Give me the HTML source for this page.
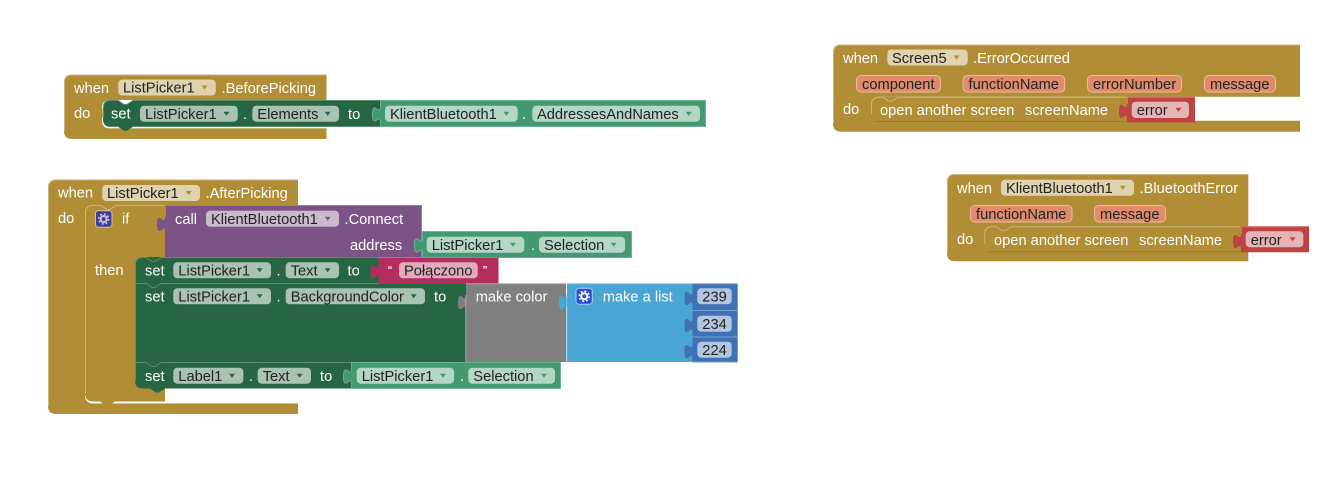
<!DOCTYPE html>
<html><head><meta charset="utf-8">
<style>
html,body{margin:0;padding:0;background:#fff;width:1335px;height:481px;overflow:hidden}
svg{display:block}
text{font-family:"Liberation Sans",Arial,sans-serif;font-size:14.67px;fill:#fff}
text.d{fill:#222}
.gold{fill:#b18e35}.gs{fill:#b18e35;stroke:#c9b071;stroke-width:1}
.dg{fill:#266643}.lg{fill:#439970;stroke:#6cb093;stroke-width:1}
.f1{fill:#dfd2ae}.f2{fill:#a8c2b4}.f3{fill:#b4d6c6}.f4{fill:#cbbace}.f5{fill:#e1abbe}.f6{fill:#b2c6e1}.f7{fill:#e5b4b4}
.arg{fill:#e08c6c;stroke:#efb9a3;stroke-width:1}
.ln{fill:none;stroke:#5d8c73;stroke-width:1}
.dk{fill:none;stroke:#9a7c2e;stroke-width:1}
.lt{fill:none;stroke:#cdb67c;stroke-width:1}
</style></head>
<body>
<svg width="1335" height="481" viewBox="0 0 1335 481" xmlns="http://www.w3.org/2000/svg">

<!-- BLOCK 1: BeforePicking -->
<path class="gold" d="M72 74.5H326.500V100H110Q102 100 102 108V120Q102 128 110 128H326.500V139H72Q64 139 64 131V82.500Q64 74.500 72 74.500Z"/>
<path class="lt" d="M64.500 131V82.500Q64.500 75 72 75H326"/>
<path class="lt" d="M102.500 108V118"/>
<path fill="#fff" opacity=".75" d="M102 118V120Q102 128.500 110 128.500H327V127.600H110Q103 127.600 103 120V118Z"/>
<path class="dg" d="M110 100H118l6 4 3 0 6-4H380V126.700H133l-6 4h-3l-6-4H110Q103 126.700 103 119V108Q103 100 110 100Z"/>
<path class="ln" d="M103.500 118V108Q103.500 100.500 110 100.500H118l6 4 3 0 6-4H380"/>
<path class="lg" d="M380.500 100.500H705.500V126.500H380.500V122c0-10-8 8-8-7.500s8 2.500 8-7.500Z"/>
<text x="74" y="93">when</text>
<rect class="f1" x="118.300" y="79.500" width="97.400" height="16" rx="4"/>
<text class="d" x="123" y="92.700">ListPicker1</text>
<path fill="#b18e35" d="M201.400 85.500h6l-3 4z"/>
<text x="221.500" y="93">.BeforePicking</text>
<text x="74" y="118">do</text>
<text x="111" y="118.500">set</text>
<rect class="f2" x="140" y="105.700" width="97.700" height="16" rx="4"/>
<text class="d" x="145" y="119">ListPicker1</text>
<path fill="#266643" d="M223.400 111.700h6l-3 4z"/>
<text x="243" y="119">.</text>
<rect class="f2" x="252.300" y="105.700" width="86.700" height="16" rx="4"/>
<text class="d" x="257.300" y="119">Elements</text>
<path fill="#266643" d="M324.700 111.700h6l-3 4z"/>
<text x="348" y="119">to</text>
<rect class="f3" x="385" y="105.700" width="132.700" height="16" rx="4"/>
<text class="d" x="390" y="119">KlientBluetooth1</text>
<path fill="#439970" d="M503.400 111.700h6l-3 4z"/>
<text x="522" y="119">.</text>
<rect class="f3" x="532.300" y="105.700" width="167.700" height="16" rx="4"/>
<text class="d" x="537" y="119">AddressesAndNames</text>
<path fill="#439970" d="M685.700 111.700h6l-3 4z"/>

<!-- BLOCK 2: AfterPicking -->
<path class="gold" d="M56 179.500H298V205H93Q85 205 85 213V395Q85 403 93 403H298V414H56Q48 414 48 406V187.500Q48 179.500 56 179.500Z"/>
<path class="lt" d="M48.500 406V187.500Q48.500 180 56 180H298"/>
<path fill="#fff" opacity=".85" d="M85 392V395Q85 403.500 93 403.500H298V402.600H93Q86 402.600 86 395V392Z"/>
<path class="gold" d="M93 205H165V257H143Q135 257 135 265V380Q135 388 143 388H165V401.500H115l-6 4h-3l-6-4H93Q85 401.500 85 393V213Q85 205 93 205Z"/>
<path class="lt" d="M85.500 393V213Q85.500 205.500 93 205.500H101l6 4 3 0 6-4H165"/>
<path class="lt" d="M135.500 265V380"/>
<path fill="#fff" d="M135 380Q135 388.500 143 388.500H165V387.600H143Q136 387.600 136 380Z" opacity=".8"/>

<!-- purple call -->
<path fill="#7c5385" d="M165 205H422V257H165V232c0-10-8 8-8-7.500s8 2.500 8-7.500Z"/>
<path fill="none" stroke="#9b7ba3" d="M165.500 216.500V205.500H421.500V257"/>

<!-- set row green -->
<path class="dg" d="M143 257H380V284H135V265Q135 257 143 257Z"/>
<path class="dg" d="M135 284H466V362H135Z"/>
<path class="dg" d="M135 362H352V388.500H165l-6 4h-3l-6-4H143Q135 388.500 135 381Z"/>
<path class="ln" d="M135.500 265Q135.500 257.500 143 257.500H146l6 4 3 0 6-4H380"/>
<path class="ln" d="M135.500 265V381"/>
<path class="ln" d="M135 283.500H146l6 4 3 0 6-4H380"/>
<path class="ln" d="M135 362.500H146l6 4 3 0 6-4H351"/>

<text x="58" y="197.700">when</text>
<rect class="f1" x="102.300" y="185" width="97.700" height="16" rx="4"/>
<text class="d" x="107" y="198">ListPicker1</text>
<path fill="#b18e35" d="M185.700 191h6l-3 4z"/>
<text x="205.500" y="198">.AfterPicking</text>
<text x="58" y="223">do</text>
<rect x="95.500" y="210.700" width="16.500" height="16.500" rx="3" fill="#443a9c" stroke="#cfc4a0" stroke-width="1"/>
<circle cx="103.700" cy="219" r="3" fill="none" stroke="#c9c6dc" stroke-width="2"/>
<circle cx="103.700" cy="219" r="5" fill="none" stroke="#c9c6dc" stroke-width="1.500" stroke-dasharray="2 1.930"/>
<text x="122" y="223.500">if</text>
<text x="95" y="275">then</text>

<text x="175" y="224">call</text>
<rect class="f4" x="206" y="210.700" width="133" height="16" rx="4"/>
<text class="d" x="211" y="224">KlientBluetooth1</text>
<path fill="#7c5385" d="M324.700 216.700h6l-3 4z"/>
<text x="344.500" y="224">.Connect</text>
<text x="350" y="250">address</text>

<path class="lg" d="M422.500 231.500H631.500V257.500H422.500V253c0-10-8 8-8-7.500s8 2.500 8-7.500Z"/>
<rect class="f3" x="426.700" y="236.700" width="97.600" height="16" rx="4"/>
<text class="d" x="431.700" y="250">ListPicker1</text>
<path fill="#439970" d="M510 242.700h6l-3 4z"/>
<text x="531" y="250">.</text>
<rect class="f3" x="539" y="236.700" width="86" height="16" rx="4"/>
<text class="d" x="544" y="250">Selection</text>
<path fill="#439970" d="M610.700 242.700h6l-3 4z"/>

<!-- string -->
<path fill="#b32d5e" d="M378.500 257H498.500V284H378.500V279c0-10-8 8-8-7.500s8 2.500 8-7.500Z"/>
<path fill="none" stroke="#c96a8d" d="M378.500 257.500H498"/>
<text x="145" y="275.700">set</text>
<rect class="f2" x="173.300" y="262.300" width="97.700" height="16" rx="4"/>
<text class="d" x="178.300" y="275.700">ListPicker1</text>
<path fill="#266643" d="M256.700 268.300h6l-3 4z"/>
<text x="276.500" y="275.700">.</text>
<rect class="f2" x="285.700" y="262.300" width="53.300" height="16" rx="4"/>
<text class="d" x="290.700" y="275.700">Text</text>
<path fill="#266643" d="M324.700 268.300h6l-3 4z"/>
<text x="347.500" y="275.700">to</text>
<text x="387.500" y="273" style="font-size:10px;font-weight:bold">“</text>
<rect class="f5" x="399" y="262.300" width="78.700" height="16" rx="4"/>
<text class="d" x="404" y="275.700">Połączono</text>
<text x="482.500" y="273" style="font-size:10px;font-weight:bold">”</text>

<!-- set BG -->
<text x="145" y="301.700">set</text>
<rect class="f2" x="173.300" y="288.300" width="97.700" height="16" rx="4"/>
<text class="d" x="178.300" y="301.700">ListPicker1</text>
<path fill="#266643" d="M256.700 294.300h6l-3 4z"/>
<text x="276.500" y="301.700">.</text>
<rect class="f2" x="285.700" y="288.300" width="139.300" height="16" rx="4"/>
<text class="d" x="290.700" y="301.700">BackgroundColor</text>
<path fill="#266643" d="M410.700 294.300h6l-3 4z"/>
<text x="434" y="301.700">to</text>

<!-- make color -->
<path fill="#808080" d="M466 283.500H566V362H466V310c0-10-8 8-8-7.500s8 2.500 8-7.500Z"/>
<path fill="none" stroke="#a8a8a8" d="M465.800 295V362M466 283.800H566"/>
<text x="475.700" y="301.700">make color</text>
<!-- make list -->
<path fill="#49a6d4" d="M567 283.500H692.500V362H567V310c0-10-8 8-8-7.500s8 2.500 8-7.500Z"/>
<path fill="none" stroke="#86c3e2" d="M566.800 295V362M567 283.800H692"/>
<rect x="576" y="288.300" width="16.300" height="16" rx="3" fill="#2c4fd8" stroke="#a8d3ea" stroke-width="1"/>
<circle cx="584.200" cy="296.300" r="3" fill="none" stroke="#fff" stroke-width="2"/>
<circle cx="584.200" cy="296.300" r="5" fill="none" stroke="#fff" stroke-width="1.500" stroke-dasharray="2 1.930"/>
<text x="602.700" y="301.700">make a list</text>
<!-- nums -->
<path fill="#3f71b5" d="M692.500 283.500H737.500V310H692.500V306c0-10-8 8-8-7.500s8 2.500 8-7.500Z"/>
<path fill="#3f71b5" d="M692.500 311H737.500V336.500H692.500V333c0-10-8 8-8-7.500s8 2.500 8-7.500Z"/>
<path fill="#3f71b5" d="M692.500 337.500H737.500V362.500H692.500V359c0-10-8 8-8-7.500s8 2.500 8-7.500Z"/>
<path fill="none" stroke="#7c9fd0" d="M692.500 283.800H737.500M737.500 284V362M692.500 310.500H737.500M692.500 337H737.500M692.500 362H737.500"/>
<rect class="f6" x="697.300" y="288.300" width="34.400" height="16" rx="4"/>
<rect class="f6" x="697.300" y="315.700" width="34.400" height="16" rx="4"/>
<rect class="f6" x="697.300" y="341.700" width="34.400" height="16" rx="4"/>
<text class="d" x="702.300" y="301.700">239</text>
<text class="d" x="702.300" y="329">234</text>
<text class="d" x="702.300" y="355">224</text>

<!-- set label -->
<text x="145" y="381">set</text>
<rect class="f2" x="173.300" y="367.700" width="70" height="16" rx="4"/>
<text class="d" x="178.300" y="381">Label1</text>
<path fill="#266643" d="M229 373.700h6l-3 4z"/>
<text x="249" y="381">.</text>
<rect class="f2" x="257.700" y="367.700" width="53.300" height="16" rx="4"/>
<text class="d" x="262.700" y="381">Text</text>
<path fill="#266643" d="M296.700 373.700h6l-3 4z"/>
<text x="320" y="381">to</text>
<path class="lg" d="M351.500 362.500H560.500V388.500H351.500V384c0-10-8 8-8-7.500s8 2.500 8-7.500Z"/>
<rect class="f3" x="356.700" y="367.700" width="97.300" height="16" rx="4"/>
<text class="d" x="361.700" y="381">ListPicker1</text>
<path fill="#439970" d="M440 373.700h6l-3 4z"/>
<text x="460" y="381">.</text>
<rect class="f3" x="468.300" y="367.700" width="86.700" height="16" rx="4"/>
<text class="d" x="473.300" y="381">Selection</text>
<path fill="#439970" d="M541 373.700h6l-3 4z"/>

<!-- BLOCK 3: ErrorOccurred -->
<path class="gold" d="M841 44.500H1300V96.700H879V120.700H1300V131.700H841Q833 131.700 833 123.700V52.500Q833 44.500 841 44.500Z"/>
<path class="lt" d="M833.500 123V52.500Q833.500 45 841 45H1300"/>
<path fill="#b18e35" d="M879 96.700H1127V122H879Q871 122 871 114V104.700Q871 96.700 879 96.700Z"/>
<path class="lt" d="M871.500 114V104.700Q871.500 97.200 879 97.200H883l6 4 3 0 6-4H1127"/>
<path class="dk" d="M874 121.500H1127"/>
<text x="843" y="63">when</text>
<rect class="f1" x="887.300" y="49.500" width="80.400" height="16" rx="4"/>
<text class="d" x="892" y="63">Screen5</text>
<path fill="#b18e35" d="M953.500 55.500h6l-3 4z"/>
<text x="973" y="63">.ErrorOccurred</text>
<rect class="arg" x="856.500" y="75.500" width="84" height="16.500" rx="4.500"/>
<text class="d" x="862" y="89">component</text>
<rect class="arg" x="963" y="75.500" width="101.700" height="16.500" rx="4.500"/>
<text class="d" x="968.500" y="89">functionName</text>
<rect class="arg" x="1087.500" y="75.500" width="94" height="16.500" rx="4.500"/>
<text class="d" x="1093" y="89">errorNumber</text>
<rect class="arg" x="1204.500" y="75.500" width="71" height="16.500" rx="4.500"/>
<text class="d" x="1210" y="89">message</text>
<text x="843" y="114">do</text>
<text x="880" y="115">open another screen</text>
<text x="1025" y="115">screenName</text>
<path fill="#bf4343" d="M1127 96.700H1195V122.500H1127V119c0-10-8 8-8-7.500s8 2.500 8-7.500Z"/>
<path fill="none" stroke="#d17575" d="M1127.500 104V97.200H1195"/>
<rect class="f7" x="1131.700" y="101.700" width="57.300" height="16.300" rx="4"/>
<text class="d" x="1136.700" y="115">error</text>
<path fill="#bf4343" d="M1175.500 107.700h6l-3 4z"/>

<!-- BLOCK 4: BluetoothError -->
<path class="gold" d="M955 174H1248.300V261.300H955Q947 261.300 947 253.300V182Q947 174 955 174Z"/>
<path class="lt" d="M947.500 253V182Q947.500 174.500 955 174.500H1248"/>
<path class="lt" d="M984.800 244V234.300Q984.800 226.800 992 226.800H996l6 4 3 0 6-4H1240"/>
<path class="dk" d="M987 251.800H1240"/>
<text x="957" y="193">when</text>
<rect class="f1" x="1001" y="179.700" width="133" height="16" rx="4"/>
<text class="d" x="1006" y="193">KlientBluetooth1</text>
<path fill="#b18e35" d="M1119.700 185.700h6l-3 4z"/>
<text x="1139.500" y="193">.BluetoothError</text>
<rect class="arg" x="970.500" y="205.500" width="101.500" height="16.500" rx="4.500"/>
<text class="d" x="976" y="219">functionName</text>
<rect class="arg" x="1094.500" y="205.500" width="71" height="16.500" rx="4.500"/>
<text class="d" x="1100" y="219">message</text>
<text x="957" y="244">do</text>
<text x="994" y="245">open another screen</text>
<text x="1139" y="245">screenName</text>
<path fill="#bf4343" d="M1241 226.300H1309V252.300H1241V249c0-10-8 8-8-7.500s8 2.500 8-7.500Z"/>
<path fill="none" stroke="#d17575" d="M1241.500 234V226.800H1309"/>
<rect class="f7" x="1245.700" y="231.300" width="57.600" height="16" rx="4"/>
<text class="d" x="1250.700" y="245">error</text>
<path fill="#bf4343" d="M1289.500 237.300h6l-3 4z"/>
</svg>
</body></html>
